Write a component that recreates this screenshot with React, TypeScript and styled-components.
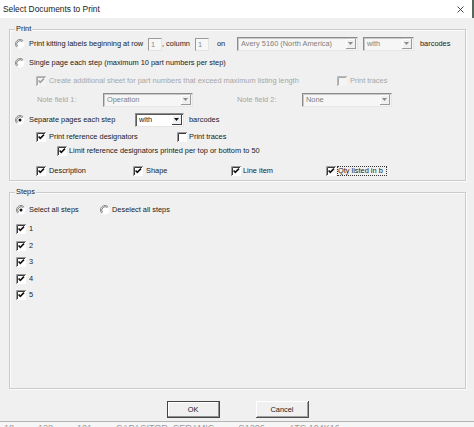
import React from "react";
import styled, { createGlobalStyle } from "styled-components";

const Global = createGlobalStyle`
  html, body { margin: 0; padding: 0; background: #f0f0f0; }
  body { font-family: "Liberation Sans", Arial, sans-serif; }
`;

const Window = styled.div`
  width: 474px;
  height: 427px;
  display: flex;
  flex-direction: column;
  background: #f0f0f0;
  overflow: hidden;
  font-family: "Liberation Sans", Arial, sans-serif;
  font-size: 7.4px;
  color: #1a1a1a;
`;

const TitleBar = styled.div`
  height: 18px;
  flex: none;
  background: #ffffff;
  display: flex;
  align-items: center;
  padding-left: 3px;
  font-size: 8.4px;
  color: #1a1a1a;
`;

const TitleText = styled.span`
  flex: 1;
`;

const CloseBtn = styled.div`
  width: 16px;
  height: 18px;
  display: flex;
  align-items: center;
  justify-content: center;
  margin-right: 4px;
`;

const EdgeStrip = styled.div`
  width: 2px;
  align-self: stretch;
  background: #56675c;
`;

const Body = styled.div`
  flex: 1;
  display: flex;
  flex-direction: column;
  padding: 11px 8px 0 9px;
`;

const GroupBox = styled.div<{ $h: number; $mt: number }>`
  position: relative;
  margin-top: ${(p) => p.$mt}px;
  height: ${(p) => p.$h}px;
  box-sizing: border-box;
  border: 1px solid #cbcbcb;
  box-shadow: inset 1px 1px 0 #fbfbfb, 1px 1px 0 #fbfbfb;
  display: flex;
  flex-direction: column;
  flex: none;
`;

const Legend = styled.span`
  position: absolute;
  top: -6px;
  left: 5px;
  padding: 0 1px;
  background: #f0f0f0;
  line-height: 10px;
`;

const Row = styled.div<{ $mt: number; $h?: number; $pl: number }>`
  display: flex;
  align-items: center;
  flex: none;
  margin-top: ${(p) => p.$mt}px;
  height: ${(p) => p.$h ?? 16}px;
  padding-left: ${(p) => p.$pl}px;
  white-space: nowrap;
`;

const Text = styled.span<{ $w?: number; $ml?: number; $disabled?: boolean }>`
  display: inline-block;
  flex: none;
  width: ${(p) => (p.$w ? `${p.$w}px` : "auto")};
  margin-left: ${(p) => p.$ml ?? 0}px;
  color: ${(p) => (p.$disabled ? "#a6a6a6" : "#1a1a1a")};
  line-height: 10px;
`;

const FocusText = styled.span<{ $w: number; $ml: number }>`
  display: inline-block;
  flex: none;
  box-sizing: border-box;
  width: ${(p) => p.$w}px;
  margin-left: ${(p) => p.$ml}px;
  padding-left: 1px;
  line-height: 10px;
  outline: 1px dotted #333;
  outline-offset: -1px;
`;

const Control = styled.span<{ $ml?: number }>`
  display: inline-flex;
  flex: none;
  margin-left: ${(p) => p.$ml ?? 0}px;
`;

const Field = styled.span<{ $w: number; $ml?: number }>`
  display: inline-flex;
  align-items: center;
  flex: none;
  box-sizing: border-box;
  width: ${(p) => p.$w}px;
  height: 13px;
  margin-left: ${(p) => p.$ml ?? 0}px;
  padding-left: 2px;
  background: #f7f7f7;
  border-top: 1px solid #9a9a9a;
  border-left: 1px solid #9a9a9a;
  border-right: 1px solid #e4e4e4;
  border-bottom: 1px solid #e4e4e4;
  color: #8a8a8a;
`;

const Combo = styled.span<{ $w: number; $ml?: number; $disabled?: boolean }>`
  display: inline-flex;
  align-items: center;
  flex: none;
  box-sizing: border-box;
  width: ${(p) => p.$w}px;
  height: 14px;
  margin-left: ${(p) => p.$ml ?? 0}px;
  background: ${(p) => (p.$disabled ? "#f6f6f6" : "#ffffff")};
  border-top: 1px solid #8c8c8c;
  border-left: 1px solid #8c8c8c;
  border-right: 1px solid #e6e6e6;
  border-bottom: 1px solid #e6e6e6;
  box-shadow: inset 1px 1px 0 ${(p) => (p.$disabled ? "#c8c8c8" : "#5a5a5a")};
  color: ${(p) => (p.$disabled ? "#7e7e7e" : "#1a1a1a")};
`;

const ComboText = styled.span`
  flex: 1;
  padding-left: 3px;
  overflow: hidden;
  line-height: 10px;
`;

const ComboButton = styled.span<{ $disabled?: boolean }>`
  width: 10px;
  height: 10px;
  margin-right: 1px;
  box-sizing: border-box;
  display: flex;
  align-items: center;
  justify-content: center;
  background: #f0f0f0;
  border-right: 1px solid ${(p) => (p.$disabled ? "#9a9a9a" : "#404040")};
  border-bottom: 1px solid ${(p) => (p.$disabled ? "#9a9a9a" : "#404040")};
  box-shadow: inset 1px 1px 0 #ffffff;
`;

const ButtonRow = styled.div`
  display: flex;
  justify-content: center;
  gap: 36px;
  margin-top: 12px;
  flex: none;
`;

const Button = styled.button<{ $default?: boolean }>`
  width: 53px;
  height: 17px;
  padding: 0;
  margin: 0;
  border: none;
  background: #f0f0f0;
  font-family: "Liberation Sans", Arial, sans-serif;
  font-size: 7.4px;
  color: #1a1a1a;
  box-shadow: ${(p) =>
    p.$default
      ? "inset 0 0 0 1px #444, inset -2px -2px 0 #909090, inset 2px 2px 0 #ffffff"
      : "inset -1px -1px 0 #505050, inset 1px 1px 0 #ffffff, inset -2px -2px 0 #a0a0a0"};
`;

const BottomStrip = styled.div`
  margin-top: auto;
  height: 5px;
  flex: none;
  overflow: hidden;
  border-top: 1px solid #b4b4b4;
  background: #f6f6f6;
  display: flex;
  gap: 24px;
  padding-left: 4px;
  font-size: 9px;
  line-height: 12px;
  color: #9a9a9a;
  white-space: nowrap;
`;

const Radio = ({ checked, ml }: { checked?: boolean; ml?: number }) => (
  <Control $ml={ml}>
    <svg width="10" height="10" viewBox="0 0 10 10">
      <circle cx="5" cy="5" r="4.5" fill="#ffffff" />
      <path d="M1.8 8.2 A4.5 4.5 0 0 1 8.2 1.8" stroke="#8a8a8a" fill="none" strokeWidth="1" />
      <path d="M2.6 7.4 A3.4 3.4 0 0 1 7.4 2.6" stroke="#5a5a5a" fill="none" strokeWidth="0.8" />
      {checked && <circle cx="5" cy="5" r="1.5" fill="#111" />}
    </svg>
  </Control>
);

const Check = ({ checked, disabled, ml }: { checked?: boolean; disabled?: boolean; ml?: number }) => (
  <Control $ml={ml}>
    <svg width="10" height="10" viewBox="0 0 10 10">
      <rect x="0" y="0" width="10" height="10" fill={disabled ? "#f4f4f4" : "#ffffff"} />
      <path d="M0.5 10 V0.5 H10" stroke={disabled ? "#b8b8b8" : "#9a9a9a"} fill="none" />
      <path d="M1.5 9 V1.5 H9" stroke={disabled ? "#a8a8a8" : "#3a3a3a"} fill="none" />
      {checked && (
        <path
          d="M2.6 4.4 L4.3 6.4 L8 2.6"
          stroke={disabled ? "#a0a0a0" : "#111"}
          strokeWidth="1.6"
          fill="none"
        />
      )}
    </svg>
  </Control>
);

const Arrow = ({ disabled }: { disabled?: boolean }) => (
  <svg width="5" height="3" viewBox="0 0 5 3">
    <path d="M0 0 H5 L2.5 3 Z" fill={disabled ? "#8a8a8a" : "#111"} />
  </svg>
);

const Select = ({ w, ml, value, disabled }: { w: number; ml?: number; value: string; disabled?: boolean }) => (
  <Combo $w={w} $ml={ml} $disabled={disabled}>
    <ComboText>{value}</ComboText>
    <ComboButton $disabled={disabled}>
      <Arrow disabled={disabled} />
    </ComboButton>
  </Combo>
);

export default function App() {
  return (
    <>
      <Global />
      <Window>
        <TitleBar>
          <TitleText>Select Documents to Print</TitleText>
          <CloseBtn>
            <svg width="7" height="7" viewBox="0 0 7 7">
              <path d="M0.5 0.5 L6.5 6.5 M6.5 0.5 L0.5 6.5" stroke="#333" strokeWidth="0.9" />
            </svg>
          </CloseBtn>
          <EdgeStrip />
        </TitleBar>
        <Body>
          <GroupBox $h={152} $mt={0}>
            <Legend>Print</Legend>
            <Row $mt={6} $pl={5}>
              <Radio />
              <Text $ml={4} $w={119}>Print kitting labels beginning at row</Text>
              <Field $w={14}>1</Field>
              <Text $w={33}>, column</Text>
              <Field $w={14}>1</Field>
              <Text $ml={8} $w={20}>on</Text>
              <Select w={121} value="Avery 5160 (North America)" disabled />
              <Select w={51} ml={5} value="with" disabled />
              <Text $ml={6}>barcodes</Text>
            </Row>
            <Row $mt={3} $pl={5}>
              <Radio />
              <Text $ml={4}>Single page each step (maximum 10 part numbers per step)</Text>
            </Row>
            <Row $mt={2} $pl={26}>
              <Check checked disabled />
              <Text $ml={3} $w={288} $disabled>
                Create additional sheet for part numbers that exceed maximum listing length
              </Text>
              <Check disabled />
              <Text $ml={3} $disabled>Print traces</Text>
            </Row>
            <Row $mt={3} $pl={27}>
              <Text $w={66} $disabled>Note field 1:</Text>
              <Select w={90} value="Operation" disabled />
              <Text $ml={44} $w={65} $disabled>Note field 2:</Text>
              <Select w={90} value="None" disabled />
            </Row>
            <Row $mt={4} $pl={5}>
              <Radio checked />
              <Text $ml={4} $w={106}>Separate pages each step</Text>
              <Select w={49} value="with" />
              <Text $ml={5}>barcodes</Text>
            </Row>
            <Row $mt={2} $h={14} $pl={26}>
              <Check checked />
              <Text $ml={3} $w={128}>Print reference designators</Text>
              <Check />
              <Text $ml={2}>Print traces</Text>
            </Row>
            <Row $mt={0} $h={14} $pl={47}>
              <Check checked />
              <Text $ml={2}>Limit reference designators printed per top or bottom to 50</Text>
            </Row>
            <Row $mt={5} $pl={26}>
              <Check checked />
              <Text $ml={3} $w={84}>Description</Text>
              <Check checked />
              <Text $ml={3} $w={85}>Shape</Text>
              <Check checked />
              <Text $ml={2} $w={83}>Line item</Text>
              <Check checked />
              <FocusText $ml={1} $w={50}>Qty listed in b</FocusText>
            </Row>
          </GroupBox>
          <GroupBox $h={197} $mt={11}>
            <Legend>Steps</Legend>
            <Row $mt={9} $pl={6}>
              <Radio checked />
              <Text $ml={3} $w={71}>Select all steps</Text>
              <Radio />
              <Text $ml={2}>Deselect all steps</Text>
            </Row>
            {["1", "2", "3", "4", "5"].map((s, i) => (
              <Row key={s} $mt={i === 0 ? 3 : 0} $h={16.5} $pl={6}>
                <Check checked />
                <Text $ml={3}>{s}</Text>
              </Row>
            ))}
          </GroupBox>
          <ButtonRow>
            <Button $default>OK</Button>
            <Button>Cancel</Button>
          </ButtonRow>
        </Body>
        <BottomStrip>
          <span>18</span>
          <span>128</span>
          <span>101</span>
          <span>CAPACITOR, CERAMIC</span>
          <span>C1206</span>
          <span>ATC 104K16</span>
        </BottomStrip>
      </Window>
    </>
  );
}
